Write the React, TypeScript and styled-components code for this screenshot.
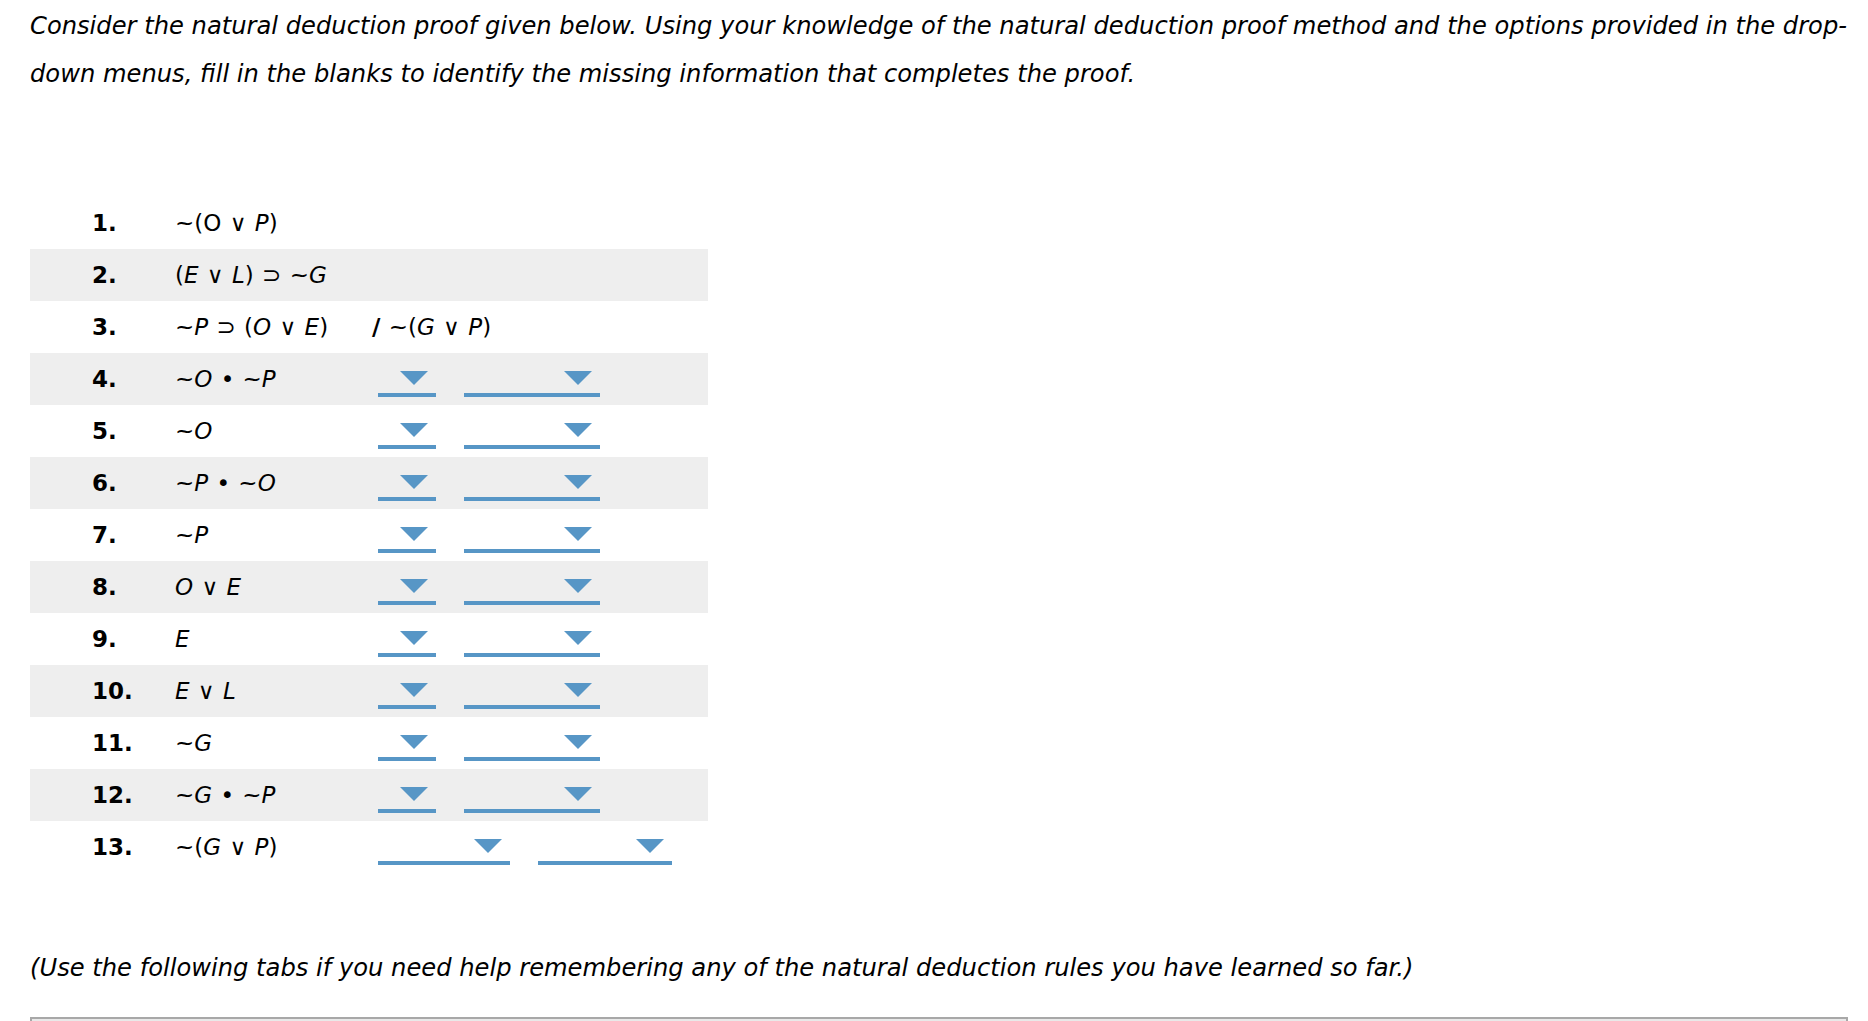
import React from "react";
import styled, { createGlobalStyle } from "styled-components";

const GlobalStyle = createGlobalStyle`
    html, body {
        margin: 0;
        padding: 0;
        background: #fff;
        overflow: hidden;
    }
    body {
        font-family: "DejaVu Sans", Verdana, sans-serif;
        color: #000;
    }
`;

const Page = styled.main`
    padding: 2px 20px 0 30px;
`;

const Prompt = styled.p`
    margin: 0;
    font-size: 24.2px;
    font-style: italic;
    line-height: 48px;
`;

const Proof = styled.div`
    margin-top: 99px;
    width: 678px;
`;

const Line = styled.div<{ $shaded: boolean }>`
    display: grid;
    grid-template-columns: 83px 197px 1fr;
    align-items: center;
    height: 52px;
    padding-left: 62px;
    background: ${(p) => (p.$shaded ? "#eeeeee" : "transparent")};
    font-size: 23px;
`;

const Num = styled.span`
    font-weight: bold;
`;

const Wff = styled.span`
    white-space: pre;
    word-spacing: 1px;
`;

const V = styled.i`
    font-style: italic;
`;

const Conclusion = styled.span`
    white-space: pre;
    word-spacing: 1px;
`;

const Slash = styled.b`
    font-weight: bold;
`;

const Picks = styled.div`
    display: flex;
    gap: 28px;
    align-self: end;
    padding-left: 6px;
    margin-bottom: 8px;
`;

const Pick = styled.button<{ $w: number }>`
    display: flex;
    justify-content: flex-end;
    align-items: flex-start;
    width: ${(p) => p.$w}px;
    height: 26px;
    padding: 0 8px 0 0;
    border: none;
    border-bottom: 4px solid #5796c6;
    background: transparent;
    cursor: pointer;
`;

const Caret = styled.span`
    width: 0;
    height: 0;
    border-left: 14px solid transparent;
    border-right: 14px solid transparent;
    border-top: 14px solid #5796c6;
`;

const Note = styled.p`
    margin: 71px 0 0;
    font-size: 24.2px;
    font-style: italic;
    line-height: 48px;
`;

const Tabs = styled.div`
    margin-top: 25px;
    height: 12px;
    border: 2px solid #a8a8a8;
    border-bottom: none;
    background: #e9e9e9;
`;

type Row = { wff: React.ReactNode; picks?: [number, number]; conclusion?: React.ReactNode };

const rows: Row[] = [
    { wff: <>~(O ∨ <V>P</V>)</> },
    { wff: <>(<V>E</V> ∨ <V>L</V>) ⊃ ~<V>G</V></> },
    {
        wff: <>~<V>P</V> ⊃ (<V>O</V> ∨ <V>E</V>)</>,
        conclusion: <><Slash>/</Slash> ~(<V>G</V> ∨ <V>P</V>)</>,
    },
    { wff: <>~<V>O</V> • ~<V>P</V></>, picks: [58, 136] },
    { wff: <>~<V>O</V></>, picks: [58, 136] },
    { wff: <>~<V>P</V> • ~<V>O</V></>, picks: [58, 136] },
    { wff: <>~<V>P</V></>, picks: [58, 136] },
    { wff: <><V>O</V> ∨ <V>E</V></>, picks: [58, 136] },
    { wff: <><V>E</V></>, picks: [58, 136] },
    { wff: <><V>E</V> ∨ <V>L</V></>, picks: [58, 136] },
    { wff: <>~<V>G</V></>, picks: [58, 136] },
    { wff: <>~<V>G</V> • ~<V>P</V></>, picks: [58, 136] },
    { wff: <>~(<V>G</V> ∨ <V>P</V>)</>, picks: [132, 134] },
];

export default function App() {
    return (
        <Page>
            <GlobalStyle />
            <Prompt>
                Consider the natural deduction proof given below. Using your knowledge of the natural
                deduction proof method and the options provided in the drop-down menus, fill in the
                blanks to identify the missing information that completes the proof.
            </Prompt>

            <Proof>
                {rows.map((r, i) => (
                    <Line key={i} $shaded={i % 2 === 1}>
                        <Num>{i + 1}.</Num>
                        <Wff>{r.wff}</Wff>
                        {r.conclusion && <Conclusion>{r.conclusion}</Conclusion>}
                        {r.picks && (
                            <Picks>
                                <Pick $w={r.picks[0]} aria-label="rule line"><Caret /></Pick>
                                <Pick $w={r.picks[1]} aria-label="rule"><Caret /></Pick>
                            </Picks>
                        )}
                    </Line>
                ))}
            </Proof>

            <Note>
                (Use the following tabs if you need help remembering any of the natural deduction rules
                you have learned so far.)
            </Note>
            <Tabs />
        </Page>
    );
}
